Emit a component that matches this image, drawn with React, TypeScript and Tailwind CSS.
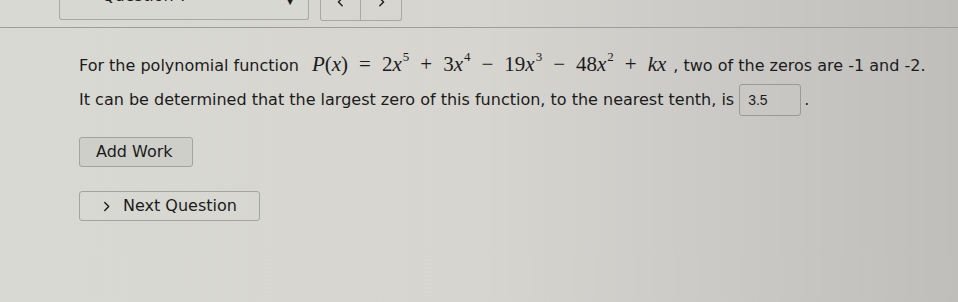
import React from "react";

const M: React.FC<{ children: React.ReactNode }> = ({ children }) => (
  <span className="italic">{children}</span>
);

const Sup: React.FC<{ children: React.ReactNode }> = ({ children }) => (
  <span className="relative -top-[10px] text-[13px] ml-[1px]">{children}</span>
);

const Chevron: React.FC<{ dir: "left" | "right"; className?: string }> = ({ dir, className }) => (
  <svg viewBox="0 0 8 12" className={className} fill="none" stroke="#1b1b1b" strokeWidth="1.6" strokeLinecap="round" strokeLinejoin="round">
    {dir === "right" ? <path d="M2 1.5 L6.5 6 L2 10.5" /> : <path d="M6 1.5 L1.5 6 L6 10.5" />}
  </svg>
);

export default function App() {
  return (
    <div
      className="relative w-[958px] h-[302px] overflow-hidden bg-gradient-to-r from-[#d9d9d3] via-[#d6d5d0] to-[#bfbebb] text-[#1b1b1b]"
      style={{ fontFamily: '"DejaVu Sans", "Open Sans", sans-serif' }}
    >
      {/* top bar */}
      <div className="h-[28px] border-b border-[#9d9d99] pl-[59px] flex items-start">
        <div className="relative w-[250px] h-[20px] border border-t-0 border-[#a9a9a4] rounded-b-[3px] bg-[#d8d8d2]">
          <span className="absolute left-[42px] -top-[12px] text-[16px] leading-none">Question 7</span>
          <span className="absolute right-[14px] -top-[4px] text-[10px] leading-none">▼</span>
        </div>
        <div className="ml-[11px] flex h-[21px] border border-t-0 border-[#a9a9a4] rounded-b-[3px]">
          <div className="w-[40px] flex justify-center border-r border-[#a9a9a4]">
            <Chevron dir="left" className="w-[7px] h-[10px] -mt-[3px]" />
          </div>
          <div className="w-[40px] flex justify-center">
            <Chevron dir="right" className="w-[7px] h-[10px] -mt-[3px]" />
          </div>
        </div>
      </div>

      <div className="pl-[79px] pt-[22px]">
        <div className="flex items-baseline text-[16px] leading-[28px] whitespace-nowrap">
          <span>For the polynomial function</span>
          <span
            className="ml-[13px] text-[21px]"
            style={{ fontFamily: '"Liberation Serif", "DejaVu Serif", serif' }}
          >
            <M>P</M>(<M>x</M>)<span className="mx-[11px]">=</span>2<M>x</M>
            <Sup>5</Sup>
            <span className="mx-[11px]">+</span>3<M>x</M>
            <Sup>4</Sup>
            <span className="mx-[11px]">−</span>19<M>x</M>
            <Sup>3</Sup>
            <span className="mx-[11px]">−</span>48<M>x</M>
            <Sup>2</Sup>
            <span className="mx-[11px]">+</span>
            <M>kx</M>
          </span>
          <span className="ml-[7px]">, two of the zeros are -1 and -2.</span>
        </div>
        <div className="flex items-center text-[16px] whitespace-nowrap mt-[3px]">
          <span>It can be determined that the largest zero of this function, to the nearest tenth, is</span>
          <div
            className="ml-[5px] w-[62px] h-[32px] border border-[#9a9a96] rounded-[3px] flex items-center pl-[8px] text-[14px]"
            style={{ fontFamily: '"Liberation Sans", Arial, sans-serif' }}
          >
            3.5
          </div>
          <span className="ml-[3px]">.</span>
        </div>

        <button className="mt-[21px] block w-[114px] h-[30px] border border-[#a3a39f] rounded-[3px] bg-[#cfcfca] text-[16px] text-left pl-[16px]">
          Add Work
        </button>
        <button className="mt-[24px] flex items-center w-[181px] h-[30px] border border-[#a3a39f] rounded-[3px] text-[16px] pl-[23px]">
          <Chevron dir="right" className="w-[7px] h-[11px] mr-[13px]" />
          Next Question
        </button>
      </div>
    </div>
  );
}
